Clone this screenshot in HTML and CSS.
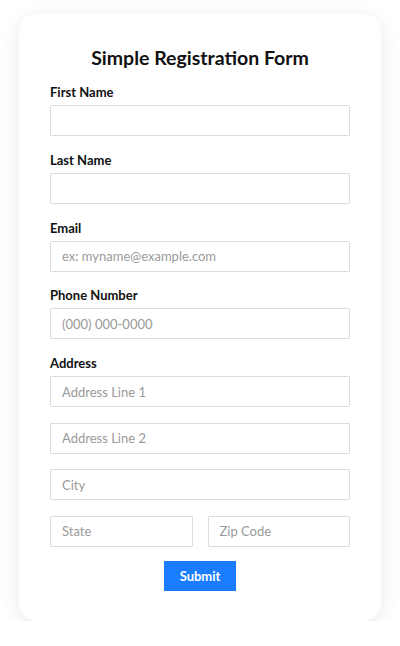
FILE: index.html
```html
<!DOCTYPE html>
<html>
<head>
<meta charset="utf-8">
<link rel="stylesheet" href="styles.css">
</head>
<body>
<form class="card">
  <h1 class="title">Simple Registration Form</h1>
  <div class="group">
    <label class="label">First Name</label>
    <input class="field" type="text">
  </div>
  <div class="group">
    <label class="label">Last Name</label>
    <input class="field" type="text">
  </div>
  <div class="group">
    <label class="label">Email</label>
    <input class="field" type="text" placeholder="ex: myname@example.com">
  </div>
  <div class="group">
    <label class="label">Phone Number</label>
    <input class="field" type="text" placeholder="(000) 000-0000">
  </div>
  <div class="group address">
    <label class="label">Address</label>
    <input class="field" type="text" placeholder="Address Line 1">
    <input class="field" type="text" placeholder="Address Line 2">
    <input class="field" type="text" placeholder="City">
    <div class="row">
      <input class="field" type="text" placeholder="State">
      <input class="field" type="text" placeholder="Zip Code">
    </div>
  </div>
  <div class="actions">
    <button class="submit" type="button">Submit</button>
  </div>
</form>
</body>
</html>
```

FILE: styles.css
```css
html, body {
  margin: 0;
  padding: 0;
  background: #ffffff;
}
body {
  padding: 14px 19px 0 19px;
  font-family: Lato, "Open Sans", sans-serif;
  color: #111;
}
.card {
  box-sizing: border-box;
  width: 362px;
  height: 607px;
  background: #fff;
  border-radius: 18px;
  box-shadow: 0 5px 20px rgba(0, 0, 0, 0.09);
  padding: 32px 31px 0 31px;
  display: flex;
  flex-direction: column;
}
.title {
  margin: 0 0 14px 0;
  text-align: center;
  font-size: 19.5px;
  line-height: 24px;
  font-weight: 700;
  color: #111;
}
.group {
  display: flex;
  flex-direction: column;
  margin-bottom: 15.8px;
}
.label {
  font-size: 13px;
  line-height: 16px;
  font-weight: 700;
  color: #111;
  margin-bottom: 5px;
}
.field {
  box-sizing: border-box;
  width: 100%;
  height: 31px;
  margin: 0;
  border: 1px solid #dcdcdc;
  border-radius: 1px;
  padding: 0 11px;
  font-family: Lato, "Open Sans", sans-serif;
  font-size: 13px;
  color: #333;
  background: #fff;
  outline: none;
}
.field::placeholder {
  color: #9a9a9a;
}
.address {
  gap: 15.5px;
  margin-bottom: 14px;
}
.address .label {
  margin-bottom: -10.5px;
}
.row {
  display: flex;
  gap: 15px;
}
.row .field {
  flex: 1;
  min-width: 0;
}
.actions {
  display: flex;
  justify-content: center;
}
.submit {
  width: 72px;
  height: 30px;
  border: none;
  border-radius: 0;
  background: #1a7dff;
  color: #fff;
  font-family: Lato, "Open Sans", sans-serif;
  font-size: 13px;
  font-weight: 700;
  padding: 0;
}
```
